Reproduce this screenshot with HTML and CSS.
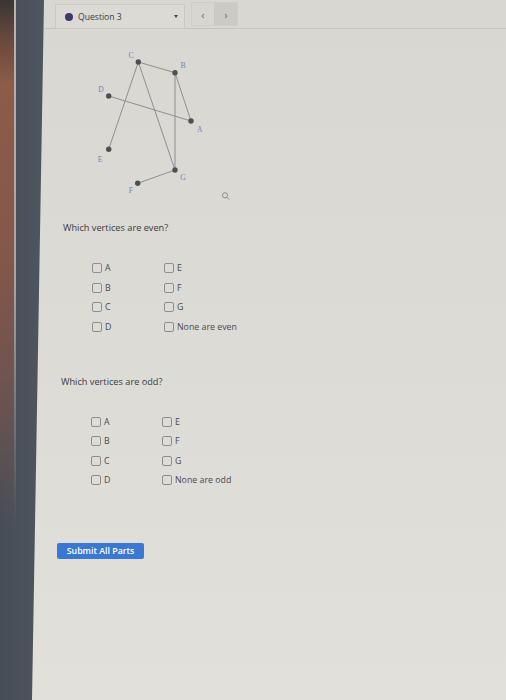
FILE: index.html
```html
<!DOCTYPE html>
<html>
<head>
<meta charset="utf-8">
<link rel="stylesheet" href="styles.css">
</head>
<body>
<div class="side"></div>
<div class="main">
  <div class="topbar">
    <div class="qselect">
      <span class="dot"></span>
      <span class="qtitle">Question 3</span>
      <span class="caret"></span>
    </div>
    <div class="nav">
      <span class="navbtn">&lsaquo;</span>
      <span class="navbtn next">&rsaquo;</span>
    </div>
  </div>

  <svg class="graph" width="220" height="170" viewBox="44 40 220 170">
    <g stroke="#8a8a8c" stroke-width="0.95" fill="none">
      <line x1="138.3" y1="62" x2="175" y2="72.7"/>
      <line x1="138.3" y1="62" x2="108.7" y2="149.3"/>
      <line x1="138.3" y1="62" x2="175" y2="170"/>
      <line x1="175" y1="72.7" x2="191" y2="121"/>
      <line x1="175" y1="72.7" x2="175" y2="170"/>
      <line x1="108.7" y1="96" x2="191" y2="121"/>
      <line x1="175" y1="170" x2="137.7" y2="183.3"/>
    </g>
    <g fill="#4f4f52">
      <circle cx="138.3" cy="62" r="2.7"/>
      <circle cx="175" cy="72.7" r="2.7"/>
      <circle cx="108.7" cy="96" r="2.7"/>
      <circle cx="191" cy="121" r="2.7"/>
      <circle cx="108.7" cy="149.3" r="2.7"/>
      <circle cx="175" cy="170" r="2.7"/>
      <circle cx="137.7" cy="183.3" r="2.7"/>
    </g>
    <g class="vlabel">
      <text x="128.5" y="57.8">C</text>
      <text x="180.5" y="68">B</text>
      <text x="98.3" y="92">D</text>
      <text x="197" y="132">A</text>
      <text x="97.8" y="161.5">E</text>
      <text x="180.3" y="180">G</text>
      <text x="128.7" y="192.7">F</text>
    </g>
    <g stroke="#8e8e8e" stroke-width="1" fill="none">
      <circle cx="225" cy="195.3" r="2.6"/>
      <line x1="226.9" y1="197.2" x2="229.2" y2="199.5"/>
    </g>
  </svg>

  <p class="question q1">Which vertices are even?</p>
  <div class="options opts1">
    <label class="opt"><span class="box"></span>A</label>
    <label class="opt"><span class="box"></span>E</label>
    <label class="opt"><span class="box"></span>B</label>
    <label class="opt"><span class="box"></span>F</label>
    <label class="opt"><span class="box"></span>C</label>
    <label class="opt"><span class="box"></span>G</label>
    <label class="opt"><span class="box"></span>D</label>
    <label class="opt"><span class="box"></span>None are even</label>
  </div>

  <p class="question q2">Which vertices are odd?</p>
  <div class="options opts2">
    <label class="opt"><span class="box"></span>A</label>
    <label class="opt"><span class="box"></span>E</label>
    <label class="opt"><span class="box"></span>B</label>
    <label class="opt"><span class="box"></span>F</label>
    <label class="opt"><span class="box"></span>C</label>
    <label class="opt"><span class="box"></span>G</label>
    <label class="opt"><span class="box"></span>D</label>
    <label class="opt"><span class="box"></span>None are odd</label>
  </div>

  <button class="submit">Submit All Parts</button>
</div>
</body>
</html>
```

FILE: styles.css
```css
html, body {
  margin: 0;
  padding: 0;
}
body {
  width: 506px;
  height: 700px;
  overflow: hidden;
  display: flex;
  font-family: "Open Sans", "Liberation Sans", sans-serif;
  color: #3d3d3f;
  background: linear-gradient(180deg, #d9d7d1 0%, #dcdbd5 50%, #e1e0db 100%);
}
.side {
  flex: 0 0 44px;
  height: 700px;
  background:
    linear-gradient(180deg, #b9b3ad 0, #a9a5a2 40%, rgba(90,96,104,0) 75%) 14px 0 / 2px 100% no-repeat,
    linear-gradient(180deg, #3a3535 0, #6b4a3e 6%, #8c5c49 12%, #84584a 35%, #6e5450 55%, rgba(76,82,91,0) 75%) 0 0 / 14px 100% no-repeat,
    linear-gradient(90deg, #474d56 0, #4c525b 60%, #50565f 100%);
  clip-path: polygon(0 0, 44px 0, 32px 100%, 0 100%);
}
.main {
  flex: 1;
  position: relative;
}
.topbar {
  height: 28px;
  border-bottom: 1px solid #c6c4be;
  display: flex;
  align-items: flex-start;
}
.qselect {
  margin: 4px 0 0 11px;
  width: 128px;
  height: 23px;
  border: 1px solid #cbc9c3;
  border-radius: 1px;
  background: #dcdad4;
  display: flex;
  align-items: center;
  position: relative;
}
.dot {
  width: 8px;
  height: 8px;
  border-radius: 50%;
  background: #3b3a6e;
  margin-left: 9px;
}
.qtitle {
  margin-left: 5px;
  font-size: 8.6px;
  color: #3a3a3e;
}
.caret {
  margin-left: auto;
  margin-right: 6px;
  width: 0;
  height: 0;
  border-left: 2.5px solid transparent;
  border-right: 2.5px solid transparent;
  border-top: 3px solid #444;
}
.nav {
  margin: 2px 0 0 6px;
  display: flex;
  height: 22px;
  border: 1px solid #cfcdc7;
}
.navbtn {
  width: 22px;
  display: flex;
  align-items: center;
  justify-content: center;
  font-size: 11px;
  color: #6b6b72;
  background: #d8d6d0;
}
.navbtn.next {
  background: #cccac5;
  border-left: 1px solid #c9c7c1;
}
.graph {
  display: block;
  margin-top: 11px;
}
.vlabel text {
  font-family: "Liberation Serif", serif;
  font-size: 7.6px;
  fill: #7d7bc0;
}
.question {
  margin: 12px 0 0 19px;
  font-size: 9.2px;
  line-height: 12px;
  color: #3b3b3e;
}
.q2 {
  margin-top: 39px;
  margin-left: 17px;
}
.options {
  display: grid;
  grid-template-columns: 72px auto;
  grid-auto-rows: 19.5px;
  margin-top: 24.5px;
  margin-left: 48px;
}
.opts2 {
  margin-left: 47px;
  grid-template-columns: 71px auto;
}
.opt {
  display: flex;
  align-items: center;
  font-size: 8.8px;
  color: #4a4a50;
}
.box {
  width: 8px;
  height: 8px;
  border: 1px solid #8d8d90;
  border-radius: 2px;
  background: #dedcd7;
  margin-right: 3px;
}
.submit {
  display: block;
  margin: 52.5px 0 0 13px;
  width: 87px;
  height: 16px;
  padding: 0;
  border: none;
  border-radius: 2px;
  background: #3b78d4;
  color: #ffffff;
  font-family: "Open Sans", "Liberation Sans", sans-serif;
  font-size: 8.8px;
  font-weight: 600;
}
```
